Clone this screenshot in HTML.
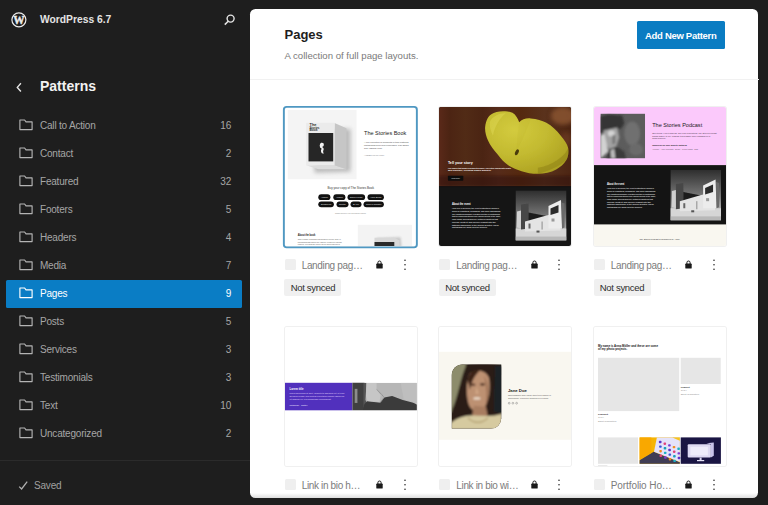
<!DOCTYPE html>
<html><head><meta charset="utf-8"><title>Patterns</title>
<style>
*{box-sizing:border-box;margin:0;padding:0}
html,body{width:768px;height:505px;overflow:hidden;background:#1e1e1e;font-family:"Liberation Sans",sans-serif;}
body{position:relative}
.abs,.a{position:absolute}
.site{position:absolute;left:40px;top:13.2px;font-size:10.3px;font-weight:bold;color:#e4e4e4;line-height:14px;white-space:nowrap}
.title{position:absolute;left:40px;top:76.8px;font-size:14px;font-weight:bold;color:#f2f2f2;line-height:18px;white-space:nowrap}
.item{position:absolute;left:6.3px;width:236px;height:27.8px;border-radius:1.5px}
.item .lbl{position:absolute;left:33.7px;top:0.7px;line-height:27.8px;font-size:10px;letter-spacing:-0.2px;color:#a6a6a6;white-space:nowrap}
.item .cnt{position:absolute;right:11px;top:0.7px;line-height:27.8px;font-size:10px;color:#a6a6a6}
.item svg{position:absolute;left:12.4px;top:7.7px}
.item.sel{background:#0a7dc5}
.item.sel .lbl,.item.sel .cnt{color:#fff}
.sep{position:absolute;left:0;top:459.5px;width:250px;height:1px;background:#2b2b2b}
.saved{position:absolute;left:34px;top:479px;font-size:10px;letter-spacing:-0.2px;color:#a0a0a0;line-height:14px}
.main{position:absolute;left:250.3px;top:9.2px;width:508.2px;height:489px;background:#fff;border-radius:5.5px;overflow:hidden}
.hline{position:absolute;left:250px;top:78.5px;width:508.5px;height:1px;background:#f1f1f1}
.h1{position:absolute;left:284.5px;top:26px;font-size:13px;font-weight:bold;color:#1e1e1e;line-height:18px}
.sub{position:absolute;left:284.5px;top:49.6px;font-size:9.6px;color:#7a7a7a;line-height:12px;white-space:nowrap}
.btn{position:absolute;left:636.5px;top:21px;width:88.5px;height:28px;background:#0a7cc2;color:#fff;font-size:9.5px;letter-spacing:-0.3px;font-weight:bold;line-height:29.6px;text-align:center;border-radius:1.5px;white-space:nowrap}
.thumb{position:absolute;width:132px;height:139px;border-radius:2px;overflow:hidden;background:#fff;box-shadow:0 0 0 1px #f0f0f0}
.thumb.focus{box-shadow:0 0 0 1.5px #3d8fc4;border-radius:2.5px}
.cb{position:absolute;width:11.3px;height:11.2px;background:#efefef;border-radius:1.5px}
.nm{position:absolute;font-size:10px;letter-spacing:-0.35px;color:#7c7c7c;line-height:14px;white-space:nowrap}
.sync{position:absolute;height:16.5px;width:57px;background:#f0f0f0;border-radius:2px;font-size:9.5px;letter-spacing:-0.3px;color:#2c2c2c;line-height:17.3px;text-align:center;white-space:nowrap}
.t{position:absolute;white-space:nowrap;line-height:1;transform-origin:0 0}
.ln{position:absolute;height:1px}
</style></head><body>
<svg class="abs" style="left:10px;top:11px" width="18" height="18" viewBox="0 0 18 18"><circle cx="8.9" cy="8.8" r="7" fill="none" stroke="#ececec" stroke-width="1.2"/><text x="3.2" y="13.1" textLength="11.4" lengthAdjust="spacingAndGlyphs" font-family="Liberation Serif,serif" font-weight="bold" font-size="12.5" fill="#ececec" stroke="#ececec" stroke-width="0.45">W</text></svg>
<div class="site">WordPress 6.7</div>
<svg class="abs" style="left:223px;top:13px" width="14" height="14" viewBox="0 0 14 14"><circle cx="7.6" cy="5.6" r="3.5" fill="none" stroke="#e6e6e6" stroke-width="1.4"/><path d="M5.2 8.2 L1.8 11.6" stroke="#e6e6e6" stroke-width="1.5" fill="none"/></svg>
<svg class="abs" style="left:14px;top:81px" width="10" height="12" viewBox="0 0 10 12"><path d="M6.9 2.3 L3.3 6.4 L6.9 10.5" stroke="#e6e6e6" stroke-width="1.4" fill="none"/></svg>
<div class="title">Patterns</div>
<div class="item" style="top:111.8px"><svg width="14" height="12" viewBox="0 0 14 12"><path d="M0.9 1 H5.6 L7 2.9 H13.1 V10.6 H0.9 Z" fill="none" stroke="#b4b4b4" stroke-width="1.15" stroke-linejoin="round"/></svg><span class="lbl">Call to Action</span><span class="cnt">16</span></div>
<div class="item" style="top:139.8px"><svg width="14" height="12" viewBox="0 0 14 12"><path d="M0.9 1 H5.6 L7 2.9 H13.1 V10.6 H0.9 Z" fill="none" stroke="#b4b4b4" stroke-width="1.15" stroke-linejoin="round"/></svg><span class="lbl">Contact</span><span class="cnt">2</span></div>
<div class="item" style="top:167.8px"><svg width="14" height="12" viewBox="0 0 14 12"><path d="M0.9 1 H5.6 L7 2.9 H13.1 V10.6 H0.9 Z" fill="none" stroke="#b4b4b4" stroke-width="1.15" stroke-linejoin="round"/></svg><span class="lbl">Featured</span><span class="cnt">32</span></div>
<div class="item" style="top:195.8px"><svg width="14" height="12" viewBox="0 0 14 12"><path d="M0.9 1 H5.6 L7 2.9 H13.1 V10.6 H0.9 Z" fill="none" stroke="#b4b4b4" stroke-width="1.15" stroke-linejoin="round"/></svg><span class="lbl">Footers</span><span class="cnt">5</span></div>
<div class="item" style="top:223.8px"><svg width="14" height="12" viewBox="0 0 14 12"><path d="M0.9 1 H5.6 L7 2.9 H13.1 V10.6 H0.9 Z" fill="none" stroke="#b4b4b4" stroke-width="1.15" stroke-linejoin="round"/></svg><span class="lbl">Headers</span><span class="cnt">4</span></div>
<div class="item" style="top:251.8px"><svg width="14" height="12" viewBox="0 0 14 12"><path d="M0.9 1 H5.6 L7 2.9 H13.1 V10.6 H0.9 Z" fill="none" stroke="#b4b4b4" stroke-width="1.15" stroke-linejoin="round"/></svg><span class="lbl">Media</span><span class="cnt">7</span></div>
<div class="item sel" style="top:279.8px"><svg width="14" height="12" viewBox="0 0 14 12"><path d="M0.9 1 H5.6 L7 2.9 H13.1 V10.6 H0.9 Z" fill="none" stroke="#fff" stroke-width="1.15" stroke-linejoin="round"/></svg><span class="lbl">Pages</span><span class="cnt">9</span></div>
<div class="item" style="top:307.8px"><svg width="14" height="12" viewBox="0 0 14 12"><path d="M0.9 1 H5.6 L7 2.9 H13.1 V10.6 H0.9 Z" fill="none" stroke="#b4b4b4" stroke-width="1.15" stroke-linejoin="round"/></svg><span class="lbl">Posts</span><span class="cnt">5</span></div>
<div class="item" style="top:335.8px"><svg width="14" height="12" viewBox="0 0 14 12"><path d="M0.9 1 H5.6 L7 2.9 H13.1 V10.6 H0.9 Z" fill="none" stroke="#b4b4b4" stroke-width="1.15" stroke-linejoin="round"/></svg><span class="lbl">Services</span><span class="cnt">3</span></div>
<div class="item" style="top:363.8px"><svg width="14" height="12" viewBox="0 0 14 12"><path d="M0.9 1 H5.6 L7 2.9 H13.1 V10.6 H0.9 Z" fill="none" stroke="#b4b4b4" stroke-width="1.15" stroke-linejoin="round"/></svg><span class="lbl">Testimonials</span><span class="cnt">3</span></div>
<div class="item" style="top:391.8px"><svg width="14" height="12" viewBox="0 0 14 12"><path d="M0.9 1 H5.6 L7 2.9 H13.1 V10.6 H0.9 Z" fill="none" stroke="#b4b4b4" stroke-width="1.15" stroke-linejoin="round"/></svg><span class="lbl">Text</span><span class="cnt">10</span></div>
<div class="item" style="top:419.8px"><svg width="14" height="12" viewBox="0 0 14 12"><path d="M0.9 1 H5.6 L7 2.9 H13.1 V10.6 H0.9 Z" fill="none" stroke="#b4b4b4" stroke-width="1.15" stroke-linejoin="round"/></svg><span class="lbl">Uncategorized</span><span class="cnt">2</span></div>
<div class="sep"></div>
<svg class="abs" style="left:18px;top:480px" width="11" height="11" viewBox="0 0 11 11"><path d="M1.2 6.6 L3.6 9 L9.2 1.6" stroke="#b0b0b0" stroke-width="1.3" fill="none"/></svg><div class="saved">Saved</div>
<div class="main"><div class="a" style="left:0;bottom:0;width:100%;height:5px;background:linear-gradient(to bottom,rgba(0,0,0,0),rgba(0,0,0,0.13))"></div></div><div class="hline"></div>
<div class="h1">Pages</div><div class="sub">A collection of full page layouts.</div><div class="btn">Add New Pattern</div>
<svg width="0" height="0" style="position:absolute"><defs>
<filter id="b1" x="-20%" y="-20%" width="140%" height="140%"><feGaussianBlur stdDeviation="1"/></filter>
<filter id="b2" x="-20%" y="-20%" width="140%" height="140%"><feGaussianBlur stdDeviation="2"/></filter>
<filter id="b3" x="-30%" y="-30%" width="160%" height="160%"><feGaussianBlur stdDeviation="3.5"/></filter>
<filter id="b05" x="-20%" y="-20%" width="140%" height="140%"><feGaussianBlur stdDeviation="0.5"/></filter>
<linearGradient id="sky" x1="0" y1="0" x2="0" y2="1"><stop offset="0" stop-color="#2e2e2e"/><stop offset="0.55" stop-color="#7d7d7d"/><stop offset="0.8" stop-color="#b5b5b5"/></linearGradient>
<linearGradient id="wood" x1="0" y1="0" x2="1" y2="0"><stop offset="0" stop-color="#5a2919"/><stop offset="0.08" stop-color="#4c2413"/><stop offset="0.2" stop-color="#512b16"/><stop offset="0.33" stop-color="#4b2413"/><stop offset="0.45" stop-color="#562b1a"/><stop offset="0.62" stop-color="#55290f"/><stop offset="0.8" stop-color="#5a321c"/><stop offset="1" stop-color="#4c2513"/></linearGradient>
<radialGradient id="flw" cx="0.35" cy="0.3" r="0.8"><stop offset="0" stop-color="#d3cb3e"/><stop offset="0.5" stop-color="#c3ba30"/><stop offset="1" stop-color="#ab9f21"/></radialGradient>
</defs></svg>
<div class="thumb" style="left:284.5px;top:107.2px"><svg class="a" style="left:0;top:0" width="132" height="139" viewBox="284.5 107.2 132 139" font-family="Liberation Sans, sans-serif"><rect x="284.5" y="107.2" width="132.0" height="139.0" fill="#fff"/><rect x="287.3" y="110.2" width="68.7" height="69.2" fill="#f4f4f4"/><path d="M314 130 L350 129 L350 172 L314 173 Z" fill="#8a8a8a" opacity="0.55" filter="url(#b2)"/><path d="M334 123.2 L346 128.5 L346 169.5 L334 165.5 Z" fill="#c6c6c6"/><path d="M305.6 165.5 L334 165.5 L346 169.5 L318 169.5 Z" fill="#dcdcdc"/><rect x="305.6" y="123.0" width="28.6" height="42.6" fill="#ebebeb"/><rect x="308.0" y="133.2" width="24.7" height="28.4" fill="#262626"/><text x="309.0" y="126.3" textLength="7.0" lengthAdjust="spacingAndGlyphs" font-size="2.6" font-weight="bold" fill="#333">The</text><text x="309.0" y="128.9" textLength="10.0" lengthAdjust="spacingAndGlyphs" font-size="2.6" font-weight="bold" fill="#333">Stories</text><text x="309.0" y="131.5" textLength="8.0" lengthAdjust="spacingAndGlyphs" font-size="2.6" font-weight="bold" fill="#333">Book</text><path d="M320.6 143 q3 -0.6 2.8 2.2 q-0.3 1.6 -1.8 2 q2.4 1.2 1.2 3.6 q-0.8 1.6 0.6 2.8 q-2 0.8 -2.8 -1.4 q-0.6 -2 0.6 -3.2 q-2.2 -1 -2 -3.2 q0.2 -2.2 1.4 -2.8 z" fill="#f2f2f2"/><text x="363.6" y="135.6" textLength="42.1" lengthAdjust="spacingAndGlyphs" font-size="5.5" fill="#1a1a1a">The Stories Book</text><text x="363.6" y="143.6" textLength="44.5" lengthAdjust="spacingAndGlyphs" font-size="2.3" fill="#4a4a4a">A fine collection of moments in time featuring</text><text x="363.6" y="146.2" textLength="44.5" lengthAdjust="spacingAndGlyphs" font-size="2.3" fill="#4a4a4a">photographs from Louis Fleckenstein, Paul Strand</text><text x="363.6" y="148.8" textLength="18.5" lengthAdjust="spacingAndGlyphs" font-size="2.3" fill="#4a4a4a">and Asahachi Kōno.</text><text x="363.6" y="156.5" textLength="20.0" lengthAdjust="spacingAndGlyphs" font-size="2.2" fill="#777">Available for pre-order</text><text x="327.0" y="189.6" textLength="46.5" lengthAdjust="spacingAndGlyphs" font-size="3" fill="#333">Buy your copy of The Stories Book</text><rect x="317.8" y="194.4" width="12.1" height="5.9" fill="#111" rx="2.95"/><text x="320.4" y="198.1" textLength="6.9" lengthAdjust="spacingAndGlyphs" font-size="2" fill="#e8e8e8">Amazon</text><rect x="332.8" y="194.4" width="12.1" height="5.9" fill="#111" rx="2.95"/><text x="335.4" y="198.1" textLength="6.9" lengthAdjust="spacingAndGlyphs" font-size="2" fill="#e8e8e8">Audible</text><rect x="347.0" y="194.4" width="17.6" height="5.9" fill="#111" rx="2.95"/><text x="349.6" y="198.1" textLength="12.4" lengthAdjust="spacingAndGlyphs" font-size="2" fill="#e8e8e8">Barnes &amp; Noble</text><rect x="367.0" y="194.4" width="16.4" height="5.9" fill="#111" rx="2.95"/><text x="369.6" y="198.1" textLength="11.2" lengthAdjust="spacingAndGlyphs" font-size="2" fill="#e8e8e8">Apple Books</text><rect x="317.8" y="201.6" width="15.6" height="5.9" fill="#111" rx="2.95"/><text x="320.4" y="205.3" textLength="10.4" lengthAdjust="spacingAndGlyphs" font-size="2" fill="#e8e8e8">Bookshop.org</text><rect x="336.0" y="201.6" width="12.0" height="5.9" fill="#111" rx="2.95"/><text x="338.6" y="205.3" textLength="6.8" lengthAdjust="spacingAndGlyphs" font-size="2" fill="#e8e8e8">Spotify</text><rect x="350.0" y="201.6" width="11.0" height="5.9" fill="#111" rx="2.95"/><text x="352.6" y="205.3" textLength="5.8" lengthAdjust="spacingAndGlyphs" font-size="2" fill="#e8e8e8">BAM!</text><rect x="363.0" y="201.6" width="20.4" height="5.9" fill="#111" rx="2.95"/><text x="365.6" y="205.3" textLength="15.2" lengthAdjust="spacingAndGlyphs" font-size="2" fill="#e8e8e8">Simon &amp; Schuster</text><text x="334.4" y="214.4" textLength="31.3" lengthAdjust="spacingAndGlyphs" font-size="2" fill="#888">Outside Europe? View international editions.</text><text x="297.3" y="236.0" textLength="17.5" lengthAdjust="spacingAndGlyphs" font-size="2.8" font-weight="bold" fill="#222">About the book</text><text x="297.3" y="240.3" textLength="43.0" lengthAdjust="spacingAndGlyphs" font-size="2.2" fill="#555">This exquisite compilation showcases a diverse array of</text><text x="297.3" y="243.0" textLength="44.0" lengthAdjust="spacingAndGlyphs" font-size="2.2" fill="#555">photographs that capture the essence of different eras and</text><text x="297.3" y="245.7" textLength="42.0" lengthAdjust="spacingAndGlyphs" font-size="2.2" fill="#555">cultures, reflecting the unique styles and perspectives</text><rect x="357.3" y="225.0" width="54.2" height="21.5" fill="#f3f3f3"/><path d="M376 238.5 L400 237.5 L401 247 L376 247 Z" fill="#aaa" opacity="0.6" filter="url(#b1)"/><path d="M374 238 L393.8 238 L399 240.5 L399 247 L374 247 Z" fill="#d8d8d8"/><rect x="374.0" y="242.2" width="19.8" height="4.8" fill="#2a2a2a"/></svg></div>
<svg class="a" style="left:280px;top:103px" width="141" height="148" viewBox="280 103 141 148"><rect x="283.85" y="106.85" width="133.0" height="140.5" rx="2.8" fill="none" stroke="#4f98c2" stroke-width="1.9"/></svg>
<div class="cb" style="left:284.6px;top:258.6px"></div>
<div class="nm" id="nm0" style="left:301.7px;top:258.9px">Landing pag…</div>
<svg class="a" style="left:376.3px;top:259.6px" width="7" height="9" viewBox="0 0 7 9"><path d="M1.9 4.2 V2.6 a1.6 1.6 0 0 1 3.2 0 V4.2" fill="none" stroke="#1a1a1a" stroke-width="1"/><rect x="0.3" y="3.6" width="6.4" height="5" rx="0.7" fill="#1a1a1a"/></svg>
<svg class="a" style="left:402.8px;top:258.8px" width="4" height="12" viewBox="0 0 4 12"><circle cx="2" cy="1.2" r="0.8" fill="#2a2a2a"/><circle cx="2" cy="5.75" r="0.8" fill="#2a2a2a"/><circle cx="2" cy="10.3" r="0.8" fill="#2a2a2a"/></svg>
<div class="sync" style="left:284.4px;top:279.0px">Not synced</div>
<div class="thumb" style="left:439.1px;top:107.2px"><svg class="a" style="left:0;top:0" width="132" height="139" viewBox="439.1 107.2 132 139" font-family="Liberation Sans, sans-serif"><rect x="439.1" y="107.2" width="132.0" height="139.0" fill="#151515"/><rect x="439.1" y="107.2" width="132.0" height="79.0" fill="url(#wood)"/><ellipse cx="563" cy="116" rx="12" ry="9" fill="#8a5531" opacity="0.85" filter="url(#b2)"/><ellipse cx="566" cy="140" rx="6" ry="8" fill="#6d3a20" opacity="0.7" filter="url(#b2)"/><rect x="439.1" y="176" width="132" height="10.2" fill="#2a1008" opacity="0.45" filter="url(#b1)"/><g filter="url(#b05)"><path d="M485.2 127.7 C486 120 488.5 116.5 491.5 114.5 C496 111 506 110.5 512.6 113 C516 115 518 119 519.3 122.5 C522 119.5 526 118.2 530.8 118.6 C537 119 542 120.5 546.5 123 C552 126 557 131 560.5 135.5 C564.5 140.5 567.5 144.5 568.2 148 C569 152.5 568.3 157.5 566.3 160.5 C564 164.5 560.5 167.5 556.3 169.6 C551 172.5 544.5 174 538 174 C532 174 526.5 173 521.7 171.4 C517 169.8 512.5 168.3 509 166 C504.5 163 501 159.3 498 155 C493.5 150 490.3 145.5 488 140.5 C486.3 136.5 485 132 485.2 127.7 Z" fill="url(#flw)"/><path d="M519.3 122.5 C518 132 517 142 516.5 151 C520 146 528 128 530.8 118.6 C526 118.2 522 119.5 519.3 122.5Z" fill="#a59a1c" opacity="0.08"/><path d="M538 174 C548 172 560 166 566.3 160.5 C568.3 157.5 569 152.5 568.2 148 C566 156 552 166 538 168 Z" fill="#8a7c14" opacity="0.45"/><ellipse cx="517" cy="152.5" rx="1.6" ry="3.2" fill="#4a3a08" transform="rotate(25 517 152.5)"/><path d="M490 122 C493 116 500 113 506 113.5 C500 118 495 126 493 136 C490.5 131 489.5 126 490 122Z" fill="#ddd650" opacity="0.55"/></g><text x="448.0" y="163.8" textLength="24.8" lengthAdjust="spacingAndGlyphs" font-size="4.2" font-weight="bold" fill="#fff">Tell your story</text><text x="448.0" y="168.9" textLength="63.0" lengthAdjust="spacingAndGlyphs" font-size="2.3" font-weight="bold" fill="#fff">Like flowers that bloom in unexpected places, every story unfolds with beauty</text><text x="448.0" y="171.6" textLength="43.5" lengthAdjust="spacingAndGlyphs" font-size="2.3" font-weight="bold" fill="#fff">and resilience, revealing hidden wonders.</text><rect x="448.0" y="176.0" width="15.4" height="5.0" fill="#0c0c0c" rx="0.8"/><text x="451.5" y="179.3" textLength="8.4" lengthAdjust="spacingAndGlyphs" font-size="1.9" fill="#eee">Learn more</text><text x="452.0" y="204.9" textLength="18.7" lengthAdjust="spacingAndGlyphs" font-size="2.8" font-weight="bold" fill="#fff">About the event</text><text x="452.0" y="209.6" textLength="47.0" lengthAdjust="spacingAndGlyphs" font-size="2.3" fill="#fff">Held over a weekend, the event is structured around a</text><text x="452.0" y="212.3" textLength="49.0" lengthAdjust="spacingAndGlyphs" font-size="2.3" fill="#fff">series of exhibitions, workshops, and panel discussions.</text><text x="452.0" y="215.0" textLength="48.0" lengthAdjust="spacingAndGlyphs" font-size="2.3" fill="#fff">The exhibitions showcase a curated selection of photographs</text><text x="452.0" y="217.7" textLength="49.0" lengthAdjust="spacingAndGlyphs" font-size="2.3" fill="#fff">that tell compelling stories from various corners of the globe,</text><text x="452.0" y="220.4" textLength="46.0" lengthAdjust="spacingAndGlyphs" font-size="2.3" fill="#fff">each image accompanied by detailed narratives that</text><text x="452.0" y="223.1" textLength="44.0" lengthAdjust="spacingAndGlyphs" font-size="2.3" fill="#fff">provide context and deeper insight into the</text><text x="452.0" y="225.8" textLength="47.0" lengthAdjust="spacingAndGlyphs" font-size="2.3" fill="#fff">historical significance of the scenes depicted. These</text><text x="452.0" y="228.5" textLength="35.0" lengthAdjust="spacingAndGlyphs" font-size="2.3" fill="#fff">photographs are drawn from the archives</text><svg x="515.6" y="190.6" width="51" height="50.2" viewBox="0 0 51 50" preserveAspectRatio="none"><rect width="51" height="50" fill="url(#sky)"/><g filter="url(#b05)"><rect x="0" y="38" width="51" height="12" fill="#d6d6d6"/><rect x="0" y="46" width="51" height="4" fill="#b8b8b8"/><path d="M5.5 14 L13 13 L13.5 38 L5.5 39 Z" fill="#474747"/><path d="M1.5 21 L5.5 20 L5.5 38 L1.5 37 Z" fill="#d0d0d0"/><path d="M13 22 L31 25.5 L13 32 Z" fill="#1d1d1d"/><path d="M9.5 31 L31 25 L45 22 L45 40 L9.5 41 Z" fill="#e4e4e4"/><path d="M33 15.5 L45.5 9.5 L46.5 38 L33 38 Z" fill="#ececec"/><path d="M35 18 L43 14.5 L43 22 L35 24.5 Z" fill="#2b2b2b"/><path d="M46 12 L49 13 L49 37 L46.5 38 Z" fill="#6a6a6a"/><rect x="13" y="33" width="2" height="5" fill="#666"/><rect x="21" y="40" width="3" height="2" fill="#555"/><rect x="26" y="31" width="1.2" height="8" fill="#9a9a9a"/><rect x="36" y="28" width="3" height="3" fill="#999"/></g></svg></svg></div>
<div class="cb" style="left:439.2px;top:258.6px"></div>
<div class="nm" id="nm1" style="left:456.3px;top:258.9px">Landing pag…</div>
<svg class="a" style="left:530.9px;top:259.6px" width="7" height="9" viewBox="0 0 7 9"><path d="M1.9 4.2 V2.6 a1.6 1.6 0 0 1 3.2 0 V4.2" fill="none" stroke="#1a1a1a" stroke-width="1"/><rect x="0.3" y="3.6" width="6.4" height="5" rx="0.7" fill="#1a1a1a"/></svg>
<svg class="a" style="left:557.4px;top:258.8px" width="4" height="12" viewBox="0 0 4 12"><circle cx="2" cy="1.2" r="0.8" fill="#2a2a2a"/><circle cx="2" cy="5.75" r="0.8" fill="#2a2a2a"/><circle cx="2" cy="10.3" r="0.8" fill="#2a2a2a"/></svg>
<div class="sync" style="left:439.0px;top:279.0px">Not synced</div>
<div class="thumb" style="left:593.6px;top:107.2px"><svg class="a" style="left:0;top:0" width="132" height="139" viewBox="593.6 107.2 132 139" font-family="Liberation Sans, sans-serif"><rect x="593.6" y="107.2" width="132.0" height="139.0" fill="#f9f7f0"/><rect x="593.6" y="107.2" width="132.0" height="58.1" fill="#fbc9fb"/><rect x="593.6" y="165.3" width="132.0" height="59.3" fill="#141414"/><svg x="600" y="113.8" width="44.7" height="44.8" viewBox="0 0 45 45" preserveAspectRatio="none"><rect width="45" height="45" fill="#5c5c5c"/><g filter="url(#b1)"><ellipse cx="32" cy="20" rx="8" ry="12" fill="#707070"/><ellipse cx="36" cy="36" rx="7" ry="6" fill="#6a6a6a"/><path d="M0 3 L8 1 L22 2 L24 10 L21 15 L8 17 L0 20 Z" fill="#363636"/><path d="M3 17 L17 14 L19 24 L16 33 L10 37 L5 30 Z" fill="#a2a2a2"/><ellipse cx="11" cy="20" rx="3.5" ry="3" fill="#d4d4d4"/><path d="M0 22 L4 20 L8 38 L0 45 Z" fill="#d2d2d2"/><path d="M8 36 L16 33 L24 38 L26 45 L6 45 Z" fill="#3b3b3b"/><path d="M12 22 L15 21 L15 30 L12 31Z" fill="#777"/><path d="M10 37 L14 35 L15 45 L11 45Z" fill="#bdbdbd"/></g></svg><text x="651.8" y="127.7" textLength="50.0" lengthAdjust="spacingAndGlyphs" font-size="5.5" fill="#1a1a1a">The Stories Podcast</text><text x="651.8" y="134.2" textLength="64.5" lengthAdjust="spacingAndGlyphs" font-size="2.2" fill="#4a3a4a">Storytelling, expert analysis, and vivid descriptions. The Stories Podcast</text><text x="651.8" y="136.9" textLength="58.0" lengthAdjust="spacingAndGlyphs" font-size="2.2" fill="#4a3a4a">brings history to life, making it accessible and engaging for a</text><text x="651.8" y="139.6" textLength="14.0" lengthAdjust="spacingAndGlyphs" font-size="2.2" fill="#4a3a4a">global audience.</text><text x="651.8" y="146.4" textLength="34.5" lengthAdjust="spacingAndGlyphs" font-size="2.4" font-weight="bold" fill="#1a1a1a">Subscribe on your favorite platform</text><text x="651.8" y="150.6" textLength="45.8" lengthAdjust="spacingAndGlyphs" font-size="2.2" fill="#6a5a6a">YouTube · Apple Podcasts · Spotify · Pocket Casts · RSS</text><text x="606.5" y="184.9" textLength="17.5" lengthAdjust="spacingAndGlyphs" font-size="2.8" font-weight="bold" fill="#fff">About the event</text><text x="606.5" y="189.5" textLength="47.0" lengthAdjust="spacingAndGlyphs" font-size="2.3" fill="#fff">Held over a weekend, the event is structured around a</text><text x="606.5" y="192.2" textLength="49.0" lengthAdjust="spacingAndGlyphs" font-size="2.3" fill="#fff">series of exhibitions, workshops, and panel discussions.</text><text x="606.5" y="194.9" textLength="48.0" lengthAdjust="spacingAndGlyphs" font-size="2.3" fill="#fff">The exhibitions showcase a curated selection of photographs</text><text x="606.5" y="197.6" textLength="49.0" lengthAdjust="spacingAndGlyphs" font-size="2.3" fill="#fff">that tell compelling stories from various corners of the globe,</text><text x="606.5" y="200.3" textLength="46.0" lengthAdjust="spacingAndGlyphs" font-size="2.3" fill="#fff">each image accompanied by detailed narratives that</text><text x="606.5" y="203.0" textLength="44.0" lengthAdjust="spacingAndGlyphs" font-size="2.3" fill="#fff">provide context and deeper insight into the</text><text x="606.5" y="205.7" textLength="47.0" lengthAdjust="spacingAndGlyphs" font-size="2.3" fill="#fff">historical significance of the scenes depicted. These</text><text x="606.5" y="208.4" textLength="35.0" lengthAdjust="spacingAndGlyphs" font-size="2.3" fill="#fff">photographs are drawn from the archives</text><svg x="670" y="170" width="50.6" height="50.6" viewBox="0 0 51 50" preserveAspectRatio="none"><rect width="51" height="50" fill="url(#sky)"/><g filter="url(#b05)"><rect x="0" y="38" width="51" height="12" fill="#d6d6d6"/><rect x="0" y="46" width="51" height="4" fill="#b8b8b8"/><path d="M5.5 14 L13 13 L13.5 38 L5.5 39 Z" fill="#474747"/><path d="M1.5 21 L5.5 20 L5.5 38 L1.5 37 Z" fill="#d0d0d0"/><path d="M13 22 L31 25.5 L13 32 Z" fill="#1d1d1d"/><path d="M9.5 31 L31 25 L45 22 L45 40 L9.5 41 Z" fill="#e4e4e4"/><path d="M33 15.5 L45.5 9.5 L46.5 38 L33 38 Z" fill="#ececec"/><path d="M35 18 L43 14.5 L43 22 L35 24.5 Z" fill="#2b2b2b"/><path d="M46 12 L49 13 L49 37 L46.5 38 Z" fill="#6a6a6a"/><rect x="13" y="33" width="2" height="5" fill="#666"/><rect x="21" y="40" width="3" height="2" fill="#555"/><rect x="26" y="31" width="1.2" height="8" fill="#9a9a9a"/><rect x="36" y="28" width="3" height="3" fill="#999"/></g></svg><text x="639.0" y="240.6" textLength="41.0" lengthAdjust="spacingAndGlyphs" font-size="2.3" fill="#333">The Stories Podcast is sponsored by Acme.</text></svg></div>
<div class="cb" style="left:593.7px;top:258.6px"></div>
<div class="nm" id="nm2" style="left:610.8px;top:258.9px">Landing pag…</div>
<svg class="a" style="left:685.4px;top:259.6px" width="7" height="9" viewBox="0 0 7 9"><path d="M1.9 4.2 V2.6 a1.6 1.6 0 0 1 3.2 0 V4.2" fill="none" stroke="#1a1a1a" stroke-width="1"/><rect x="0.3" y="3.6" width="6.4" height="5" rx="0.7" fill="#1a1a1a"/></svg>
<svg class="a" style="left:711.9px;top:258.8px" width="4" height="12" viewBox="0 0 4 12"><circle cx="2" cy="1.2" r="0.8" fill="#2a2a2a"/><circle cx="2" cy="5.75" r="0.8" fill="#2a2a2a"/><circle cx="2" cy="10.3" r="0.8" fill="#2a2a2a"/></svg>
<div class="sync" style="left:593.5px;top:279.0px">Not synced</div>
<div class="thumb" style="left:284.5px;top:327.2px"><svg class="a" style="left:0;top:0" width="132" height="139" viewBox="284.5 327.2 132 139" font-family="Liberation Sans, sans-serif"><rect x="284.5" y="327.2" width="132.0" height="139.0" fill="#fff"/><rect x="284.5" y="383.0" width="67.4" height="27.5" fill="#5130bd"/><text x="289.0" y="390.0" textLength="14.0" lengthAdjust="spacingAndGlyphs" font-size="2.6" font-weight="bold" fill="#fff">Lorem title</text><text x="289.0" y="394.7" textLength="54.8" lengthAdjust="spacingAndGlyphs" font-size="2.1" fill="#e4dcff">Lorem ipsum dolor sit amet, consectetur adipiscing elit. Ut enim</text><text x="289.0" y="397.5" textLength="54.8" lengthAdjust="spacingAndGlyphs" font-size="2.1" fill="#e4dcff">ad minim veniam, quis nostrud exercitation ullamco laboris nisi</text><text x="289.0" y="400.3" textLength="42.0" lengthAdjust="spacingAndGlyphs" font-size="2.1" fill="#e4dcff">ut aliquip ex ea commodo consequat.</text><text x="289.0" y="405.8" textLength="18.0" lengthAdjust="spacingAndGlyphs" font-size="2.2" fill="#f0eaff">Instagram · Twitter</text><svg x="351.9" y="383" width="64.4" height="27.5" viewBox="352 383 64 27.3" preserveAspectRatio="none"><rect x="352.0" y="383.0" width="64.0" height="27.3" fill="#b6b6b6"/><g filter="url(#b05)"><rect x="351.0" y="382.0" width="13.0" height="29.0" fill="#404040"/><rect x="354.3" y="389.0" width="2.7" height="14.0" fill="#8c8c8c"/><path d="M363 383 L366 383 L365 400 L367 404 L363 411 Z" fill="#555"/><path d="M362 411 L364 404 L366.7 401.4 L379.7 402.7 L383.7 397.5 L391.5 396 L402 400 L412.4 402.7 L417 405 L417 411 Z" fill="#3a3a3a"/><path d="M375 388.5 L381 394.5 L383.5 397.5 L380 402" fill="none" stroke="#8e8e8e" stroke-width="0.8"/><path d="M366 383 L376 383 L376 390 L380 395 L379 402 L367 401 L365.5 396 Z" fill="#c6c6c6"/><path d="M400 383 L417 383 L417 404 L412 402 L403 399.5 Z" fill="#bebebe"/></g></svg></svg></div>
<div class="cb" style="left:284.6px;top:478.6px"></div>
<div class="nm" id="nm3" style="left:301.7px;top:478.9px">Link in bio h…</div>
<svg class="a" style="left:376.3px;top:479.6px" width="7" height="9" viewBox="0 0 7 9"><path d="M1.9 4.2 V2.6 a1.6 1.6 0 0 1 3.2 0 V4.2" fill="none" stroke="#1a1a1a" stroke-width="1"/><rect x="0.3" y="3.6" width="6.4" height="5" rx="0.7" fill="#1a1a1a"/></svg>
<svg class="a" style="left:402.8px;top:478.8px" width="4" height="12" viewBox="0 0 4 12"><circle cx="2" cy="1.2" r="0.8" fill="#2a2a2a"/><circle cx="2" cy="5.75" r="0.8" fill="#2a2a2a"/><circle cx="2" cy="10.3" r="0.8" fill="#2a2a2a"/></svg>
<div class="thumb" style="left:439.1px;top:327.2px"><svg class="a" style="left:0;top:0" width="132" height="139" viewBox="439.1 327.2 132 139" font-family="Liberation Sans, sans-serif"><rect x="439.1" y="327.2" width="132.0" height="139.0" fill="#fff"/><rect x="439.1" y="352.0" width="132.0" height="88.0" fill="#f9f7f0"/><clipPath id="pc"><path d="M462.5 364.6 H501.4 V418.5 A10.5 10.5 0 0 1 490.9 429 H451.9 V375.2 A10.6 10.6 0 0 1 462.5 364.6 Z"/></clipPath><g clip-path="url(#pc)"><rect x="451.0" y="364.0" width="51.0" height="66.0" fill="#2b2019"/><g filter="url(#b1)"><rect x="450.0" y="363.0" width="16.0" height="49.0" fill="#8d8c6c"/><path d="M466 366 C474 362 496 362 503 368 L503 416 L494 420 L470 418 L452 424 L452 410 C458 398 460 380 466 366 Z" fill="#2a1c17"/><path d="M495 366 L503 366 L503 414 L494 412 Z" fill="#1d2327"/><path d="M470 374 C476 369 486 370 489 378 C491 388 489 402 484 409 C479 414 472 412 469 405 C466 396 466 382 470 374 Z" fill="#bd9172"/><path d="M468 380 C469 372 476 369 481 370 C476 374 472 380 470 390 Z" fill="#3a2418"/><ellipse cx="473" cy="385" rx="2.6" ry="1.3" fill="#5a3a2a"/><ellipse cx="482.6" cy="384.6" rx="2.6" ry="1.3" fill="#5a3a2a"/><path d="M476.5 387 L479 394 L475.5 394 Z" fill="#d8ae8c" opacity="0.8"/><ellipse cx="477" cy="398.6" rx="3.6" ry="1.2" fill="#f0e0d0"/><path d="M484 376 C489 382 490 398 485 408 C488 400 487 384 484 376 Z" fill="#8a5e44" opacity="0.8"/><path d="M474 406 L486 407 L488 417 L472 417 Z" fill="#a87d60"/><path d="M451 423 C460 416 470 415 478 416 C486 416 494 417 502 414 L502 430 L451 430 Z" fill="#d6caa0"/><path d="M468 418 C474 424 482 424 488 418" fill="none" stroke="#b09a6a" stroke-width="1.2"/></g></g><text x="508.0" y="391.8" textLength="19.0" lengthAdjust="spacingAndGlyphs" font-size="2.8" font-weight="bold" fill="#222">Jane Doe</text><text x="508.0" y="396.1" textLength="43.0" lengthAdjust="spacingAndGlyphs" font-size="2.1" fill="#555">Photographer and visual storyteller based in</text><text x="508.0" y="399.4" textLength="41.0" lengthAdjust="spacingAndGlyphs" font-size="2.1" fill="#555">Stockholm, currently working on a book.</text><circle cx="509.3" cy="403.4" r="0.9" fill="none" stroke="#666" stroke-width="0.4"/><circle cx="513" cy="403.4" r="0.9" fill="none" stroke="#666" stroke-width="0.4"/><circle cx="516.7" cy="403.4" r="0.9" fill="none" stroke="#666" stroke-width="0.4"/></svg></div>
<div class="cb" style="left:439.2px;top:478.6px"></div>
<div class="nm" id="nm4" style="left:456.3px;top:478.9px">Link in bio wi…</div>
<svg class="a" style="left:530.9px;top:479.6px" width="7" height="9" viewBox="0 0 7 9"><path d="M1.9 4.2 V2.6 a1.6 1.6 0 0 1 3.2 0 V4.2" fill="none" stroke="#1a1a1a" stroke-width="1"/><rect x="0.3" y="3.6" width="6.4" height="5" rx="0.7" fill="#1a1a1a"/></svg>
<svg class="a" style="left:557.4px;top:478.8px" width="4" height="12" viewBox="0 0 4 12"><circle cx="2" cy="1.2" r="0.8" fill="#2a2a2a"/><circle cx="2" cy="5.75" r="0.8" fill="#2a2a2a"/><circle cx="2" cy="10.3" r="0.8" fill="#2a2a2a"/></svg>
<div class="thumb" style="left:593.6px;top:327.2px"><svg class="a" style="left:0;top:0" width="132" height="139" viewBox="593.6 327.2 132 139" font-family="Liberation Sans, sans-serif"><rect x="593.6" y="327.2" width="132.0" height="139.0" fill="#fff"/><text x="597.6" y="346.8" textLength="60.0" lengthAdjust="spacingAndGlyphs" font-size="2.7" font-weight="bold" fill="#111">My name is Anna Möller and these are some</text><text x="597.6" y="350.6" textLength="29.2" lengthAdjust="spacingAndGlyphs" font-size="2.7" font-weight="bold" fill="#111">of my photo projects.</text><rect x="597.6" y="358.0" width="81.2" height="53.3" fill="#e6e6e6"/><rect x="680.3" y="358.0" width="40.0" height="26.2" fill="#e6e6e6"/><text x="680.3" y="388.1" textLength="9.0" lengthAdjust="spacingAndGlyphs" font-size="2.4" font-weight="bold" fill="#222">Project</text><text x="680.3" y="391.3" textLength="6.0" lengthAdjust="spacingAndGlyphs" font-size="1.8" fill="#aaa">2024</text><text x="680.3" y="395.6" textLength="18.3" lengthAdjust="spacingAndGlyphs" font-size="2.2" fill="#888">Short description</text><text x="597.6" y="415.2" textLength="10.0" lengthAdjust="spacingAndGlyphs" font-size="2.4" font-weight="bold" fill="#222">Project</text><text x="597.6" y="418.4" textLength="6.0" lengthAdjust="spacingAndGlyphs" font-size="1.8" fill="#aaa">2024</text><text x="597.6" y="422.7" textLength="18.4" lengthAdjust="spacingAndGlyphs" font-size="2.2" fill="#888">Short description</text><rect x="597.6" y="437.6" width="40.0" height="26.4" fill="#e6e6e6"/><rect x="639.2" y="437.6" width="40.2" height="26.4" fill="#f6b403"/><g filter="url(#b05)"><path d="M639.2 460.5 L653.4 452 L679.4 462.5 L679.4 464 L639.2 464 Z" fill="#3f3c55"/><path d="M639.2 437.6 L651 437.6 L651 453 L639.2 460 Z" fill="#f9a800"/><path d="M656.5 437.6 L679.4 437.6 L679.4 462.3 L653.6 452 Z" fill="#e4e2fa"/><rect x="658.5" y="441.0" width="2.6" height="2.4" rx="0.8" fill="#5b35c8"/><rect x="663.1" y="442.7" width="2.6" height="2.4" rx="0.8" fill="#e2437a"/><rect x="667.7" y="444.4" width="2.6" height="2.4" rx="0.8" fill="#7a3bd0"/><rect x="672.3" y="446.1" width="2.6" height="2.4" rx="0.8" fill="#f08a24"/><rect x="676.9" y="447.8" width="2.6" height="2.4" rx="0.8" fill="#1fb0c4"/><rect x="658.7" y="445.6" width="2.6" height="2.4" rx="0.8" fill="#3a54d6"/><rect x="663.3" y="447.3" width="2.6" height="2.4" rx="0.8" fill="#16a0b8"/><rect x="667.9" y="449.0" width="2.6" height="2.4" rx="0.8" fill="#5b35c8"/><rect x="672.5" y="450.7" width="2.6" height="2.4" rx="0.8" fill="#e2437a"/><rect x="677.1" y="452.4" width="2.6" height="2.4" rx="0.8" fill="#7a3bd0"/><rect x="658.9" y="450.2" width="2.6" height="2.4" rx="0.8" fill="#f08a24"/><rect x="663.5" y="451.9" width="2.6" height="2.4" rx="0.8" fill="#1fb0c4"/><rect x="668.1" y="453.6" width="2.6" height="2.4" rx="0.8" fill="#3a54d6"/><rect x="672.7" y="455.3" width="2.6" height="2.4" rx="0.8" fill="#16a0b8"/><rect x="677.3" y="457.0" width="2.6" height="2.4" rx="0.8" fill="#5b35c8"/><rect x="659.1" y="454.8" width="2.6" height="2.4" rx="0.8" fill="#e2437a"/><rect x="663.7" y="456.5" width="2.6" height="2.4" rx="0.8" fill="#7a3bd0"/><rect x="668.3" y="458.2" width="2.6" height="2.4" rx="0.8" fill="#f08a24"/><rect x="672.9" y="459.9" width="2.6" height="2.4" rx="0.8" fill="#1fb0c4"/><path d="M672 437.6 L679.4 437.6 L679.4 441 Z" fill="#f6c21a"/></g><rect x="680.3" y="437.6" width="40.2" height="26.4" fill="#1a1543"/><g filter="url(#b05)"><rect x="687.3" y="444.4" width="23.2" height="13.4" fill="#dedaf2" rx="1"/><path d="M706 443.4 L713.4 442.6 L713.4 456 L710.5 457.8 L710.5 444.4 Z" fill="#c9c3ea"/><rect x="690.0" y="447.0" width="17.5" height="8.5" fill="#eeecfa"/><rect x="699.2" y="457.8" width="2.0" height="2.6" fill="#d6d2ee"/><rect x="696.6" y="460.2" width="7.2" height="1.2" fill="#e6e3f6"/></g><rect x="597.6" y="465.6" width="9.4" height="0.6" fill="#ddd"/></svg></div>
<div class="cb" style="left:593.7px;top:478.6px"></div>
<div class="nm" id="nm5" style="letter-spacing:-0.1px;left:610.8px;top:478.9px">Portfolio Ho…</div>
<svg class="a" style="left:685.4px;top:479.6px" width="7" height="9" viewBox="0 0 7 9"><path d="M1.9 4.2 V2.6 a1.6 1.6 0 0 1 3.2 0 V4.2" fill="none" stroke="#1a1a1a" stroke-width="1"/><rect x="0.3" y="3.6" width="6.4" height="5" rx="0.7" fill="#1a1a1a"/></svg>
<svg class="a" style="left:711.9px;top:478.8px" width="4" height="12" viewBox="0 0 4 12"><circle cx="2" cy="1.2" r="0.8" fill="#2a2a2a"/><circle cx="2" cy="5.75" r="0.8" fill="#2a2a2a"/><circle cx="2" cy="10.3" r="0.8" fill="#2a2a2a"/></svg>
</body></html>
